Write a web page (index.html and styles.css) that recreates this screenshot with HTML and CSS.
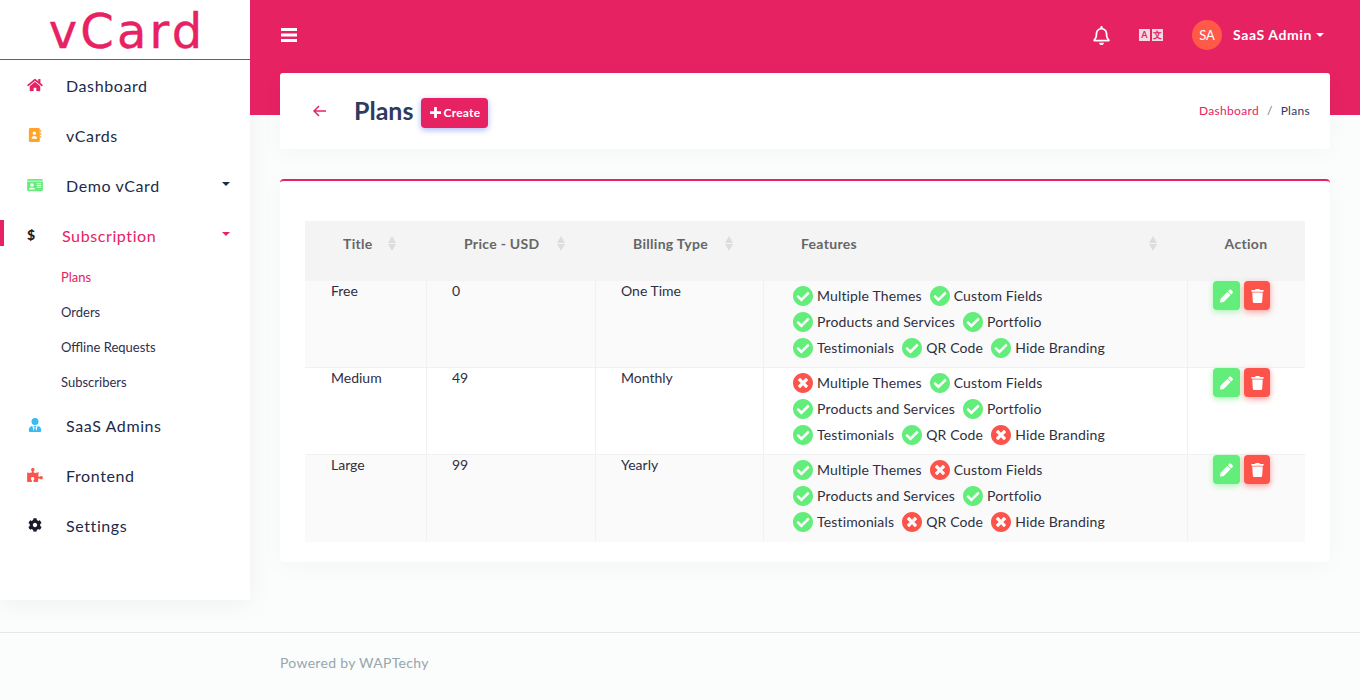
FILE: index.html
```html
<!DOCTYPE html>
<html lang="en">
<head>
  <meta charset="UTF-8">
  <title>Plans - vCard</title>
  <link rel="stylesheet" href="styles.css">
</head>
<body>
  <svg class="sprite" xmlns="http://www.w3.org/2000/svg">
    <symbol id="i-check" viewBox="8 8 496 496"><path d="M504 256c0 136.967-111.033 248-248 248S8 392.967 8 256 119.033 8 256 8s248 111.033 248 248zM227.314 387.314l184-184c6.248-6.248 6.248-16.379 0-22.627l-22.627-22.627c-6.248-6.249-16.379-6.249-22.628 0L216 308.118l-70.059-70.059c-6.248-6.248-16.379-6.248-22.628 0l-22.627 22.627c-6.248 6.248-6.248 16.379 0 22.627l104 104c6.249 6.25 16.379 6.25 22.628.001z"/></symbol>
    <symbol id="i-times" viewBox="8 8 496 496"><path d="M256 8C119 8 8 119 8 256s111 248 248 248 248-111 248-248S393 8 256 8zm121.6 313.1c4.7 4.7 4.7 12.3 0 17L338 377.6c-4.7 4.7-12.3 4.7-17 0L256 312l-65.1 65.6c-4.7 4.7-12.3 4.7-17 0L134.4 338c-4.7-4.7-4.7-12.3 0-17l65.6-65-65.6-65.1c-4.7-4.7-4.7-12.3 0-17l39.6-39.6c4.7-4.7 12.3-4.7 17 0l65 65.7 65.1-65.6c4.7-4.7 12.3-4.7 17 0l39.6 39.6c4.7 4.7 4.7 12.3 0 17L312 256l65.6 65.1z"/></symbol>
    <symbol id="i-pencil" viewBox="0 0 512 512"><path d="M497.9 142.1l-46.1 46.1c-4.7 4.7-12.3 4.7-17 0l-111-111c-4.7-4.7-4.7-12.3 0-17l46.1-46.1c18.7-18.7 49.1-18.7 67.9 0l60.1 60.1c18.8 18.7 18.8 49.1 0 67.9zM284.2 99.8L21.6 362.4.4 483.9c-2.9 16.4 11.4 30.6 27.8 27.8l121.5-21.3 262.6-262.6c4.7-4.7 4.7-12.3 0-17l-111-111c-4.8-4.7-12.4-4.7-17.1 0z"/></symbol>
    <symbol id="i-trash" viewBox="0 0 448 512"><path d="M432 32H312l-9.4-18.7A24 24 0 0 0 281.1 0H166.8a23.72 23.72 0 0 0-21.4 13.3L136 32H16A16 16 0 0 0 0 48v32a16 16 0 0 0 16 16h416a16 16 0 0 0 16-16V48a16 16 0 0 0-16-16zM53.2 467a48 48 0 0 0 47.9 45h245.8a48 48 0 0 0 47.9-45L416 128H32z"/></symbol>
  </svg>

  <aside class="sidebar">
    <div class="logo">vCard</div>
    <ul class="nav">
      <li class="nav-item">
        <svg class="nav-icon c-pink" viewBox="0 0 576 512"><path d="M280.37 148.26L96 300.11V464a16 16 0 0 0 16 16l112.06-.29a16 16 0 0 0 15.92-16V368a16 16 0 0 1 16-16h64a16 16 0 0 1 16 16v95.64a16 16 0 0 0 16 16.05L464 480a16 16 0 0 0 16-16V300L295.67 148.26a12.19 12.19 0 0 0-15.3 0zM571.6 251.47L488 182.56V44.05a12 12 0 0 0-12-12h-56a12 12 0 0 0-12 12v72.61L318.47 43a48 48 0 0 0-61 0L4.34 251.47a12 12 0 0 0-1.6 16.9l25.5 31A12 12 0 0 0 45.15 301l235.22-193.74a12.19 12.19 0 0 1 15.3 0L530.9 301a12 12 0 0 0 16.9-1.6l25.5-31a12 12 0 0 0-1.7-16.93z"/></svg>
        <span>Dashboard</span>
      </li>
      <li class="nav-item">
        <svg class="nav-icon c-orange" viewBox="0 0 448 512"><path d="M48 0h304a48 48 0 0 1 48 48v416a48 48 0 0 1-48 48H48a48 48 0 0 1-48-48V48A48 48 0 0 1 48 0zm152 128a64 64 0 1 0 0 128 64 64 0 0 0 0-128zm-96 240v24h192v-24c0-44-43-72-96-72s-96 28-96 72zM416 64h32v80h-32zm0 112h32v80h-32zm0 112h32v80h-32z"/></svg>
        <span>vCards</span>
      </li>
      <li class="nav-item has-caret">
        <svg class="nav-icon c-green" viewBox="0 0 576 512"><path d="M528 32H48C21.5 32 0 53.5 0 80v16h576V80c0-26.5-21.5-48-48-48zM0 432c0 26.5 21.5 48 48 48h480c26.5 0 48-21.5 48-48V128H0v304zm352-232c0-4.4 3.6-8 8-8h144c4.4 0 8 3.6 8 8v16c0 4.4-3.6 8-8 8H360c-4.4 0-8-3.6-8-8v-16zm0 64c0-4.4 3.6-8 8-8h144c4.4 0 8 3.6 8 8v16c0 4.4-3.6 8-8 8H360c-4.4 0-8-3.6-8-8v-16zm0 64c0-4.4 3.6-8 8-8h144c4.4 0 8 3.6 8 8v16c0 4.4-3.6 8-8 8H360c-4.4 0-8-3.6-8-8v-16zM176 192c35.3 0 64 28.7 64 64s-28.7 64-64 64-64-28.7-64-64 28.7-64 64-64zM67.1 396.2C75.5 370.5 99.6 352 128 352h8.2c12.3 5.1 25.7 8 39.8 8s27.6-2.9 39.8-8h8.2c28.4 0 52.5 18.5 60.9 44.2 3.2 9.9-5.2 19.8-15.6 19.8H82.7c-10.4 0-18.8-10-15.6-19.8z"/></svg>
        <span>Demo vCard</span>
      </li>
      <li class="nav-item has-caret active">
        <span class="nav-icon dollar">$</span>
        <span>Subscription</span>
      </li>
      <li class="sub-item current">Plans</li>
      <li class="sub-item">Orders</li>
      <li class="sub-item">Offline Requests</li>
      <li class="sub-item">Subscribers</li>
      <li class="nav-item">
        <svg class="nav-icon c-blue" viewBox="0 0 448 512"><path d="M224 256a128 128 0 1 0 0-256 128 128 0 0 0 0 256zm95.8 32.6L272 480l-32-136 32-56h-96l32 56-32 136-47.8-191.4C56.9 292 0 350.3 0 422.4V464c0 26.5 21.5 48 48 48h352c26.5 0 48-21.5 48-48v-41.6c0-72.1-56.9-130.4-128.2-133.8z"/></svg>
        <span>SaaS Admins</span>
      </li>
      <li class="nav-item">
        <svg class="nav-icon c-red" viewBox="0 0 576 512"><path d="M519.442 288.651c-41.519 0-59.5 31.593-82.058 31.593C377.409 320.244 432 144 432 144s-196.288 80-196.288-3.297c0-35.827 36.288-46.25 36.288-85.985C272 19.216 243.885 0 210.539 0c-34.654 0-66.366 18.891-66.366 56.346 0 41.364 31.711 59.277 31.711 81.75C175.885 207.719 0 166.758 0 166.758v333.237s178.635 41.047 178.635-28.662c0-22.473-40-40.107-40-81.471 0-37.456 29.25-56.346 63.577-56.346 33.673 0 61.788 19.216 61.788 54.717 0 39.735-36.288 50.158-36.288 85.985 0 60.803 129.675 25.73 181.23 25.73 0 0-34.725-120.101 25.827-120.101 35.962 0 46.423 36.152 86.308 36.152C556.712 416 576 387.99 576 354.443c0-34.199-18.962-65.792-56.558-65.792z"/></svg>
        <span>Frontend</span>
      </li>
      <li class="nav-item">
        <svg class="nav-icon c-dark" viewBox="0 0 512 512"><path d="M487.4 315.7l-42.6-24.6c4.3-23.2 4.3-47 0-70.2l42.6-24.6c4.9-2.8 7.1-8.6 5.5-14-11.1-35.6-30-67.8-54.7-94.6-3.8-4.1-10-5.1-14.8-2.3L380.8 110c-17.9-15.4-38.5-27.3-60.8-35.1V25.8c0-5.6-3.9-10.5-9.4-11.7-36.7-8.2-74.3-7.8-109.2 0-5.5 1.2-9.4 6.1-9.4 11.7V75c-22.2 7.9-42.8 19.8-60.8 35.1L88.7 85.5c-4.9-2.8-11-1.9-14.8 2.3-24.7 26.7-43.6 58.9-54.7 94.6-1.7 5.4.6 11.2 5.5 14L67.3 221c-4.3 23.2-4.3 47 0 70.2l-42.6 24.6c-4.9 2.8-7.1 8.6-5.5 14 11.1 35.6 30 67.8 54.7 94.6 3.8 4.1 10 5.1 14.8 2.3l42.6-24.6c17.9 15.4 38.5 27.3 60.8 35.1v49.2c0 5.6 3.9 10.5 9.4 11.7 36.7 8.2 74.3 7.8 109.2 0 5.5-1.2 9.4-6.1 9.4-11.7v-49.2c22.2-7.9 42.8-19.8 60.8-35.1l42.6 24.6c4.9 2.8 11 1.9 14.8-2.3 24.7-26.7 43.6-58.9 54.7-94.6 1.5-5.5-.7-11.3-5.6-14.1zM256 336c-44.1 0-80-35.9-80-80s35.9-80 80-80 80 35.9 80 80-35.9 80-80 80z"/></svg>
        <span>Settings</span>
      </li>
    </ul>
  </aside>

  <div class="main">
    <header class="topbar">
      <svg class="bars" viewBox="0 0 16 14"><path d="M0 0h16v3H0zM0 5.5h16v3H0zM0 11h16v3H0z"/></svg>
      <div class="topbar-right">
        <svg class="bell" viewBox="0 0 448 512"><path d="M224 512c35 0 64-29 64-64H160c0 35 29 64 64 64zm215-150c-19-21-55-52-55-154 0-78-54-140-128-155V32a32 32 0 0 0-64 0v21C118 68 64 130 64 208c0 102-36 133-55 154-6 6-9 14-9 22 0 16 13 32 32 32h384c19 0 32-16 32-32 0-8-3-16-9-22zM67 368c21-28 45-74 45-160v-1c0-62 50-111 112-111s112 49 112 112c0 86 24 132 45 160H67z"/></svg>
        <div class="lang"><span>A</span><span>文</span></div>
        <div class="avatar">SA</div>
        <div class="user">SaaS Admin</div>
      </div>
    </header>

    <div class="content">
      <section class="title-card">
        <svg class="back" viewBox="0 0 14 12"><path d="M6 1L1 6l5 5M1 6h12"/></svg>
        <h1>Plans</h1>
        <a class="btn-create"><svg class="plus" viewBox="0 0 12 12"><path d="M4.5 0h3v4.5H12v3H7.5V12h-3V7.5H0v-3h4.5z"/></svg>Create</a>
        <div class="breadcrumb">
          <a>Dashboard</a><span class="slash">/</span><span>Plans</span>
        </div>
      </section>

      <section class="table-card">
        <table class="plans">
          <thead>
            <tr>
              <th class="col-title"><div class="th-in"><span>Title</span><i class="sort"></i></div></th>
              <th class="col-price"><div class="th-in"><span>Price - USD</span><i class="sort"></i></div></th>
              <th class="col-billing"><div class="th-in"><span>Billing Type</span><i class="sort"></i></div></th>
              <th class="col-features"><div class="th-in"><span>Features</span><i class="sort"></i></div></th>
              <th class="col-action">Action</th>
            </tr>
          </thead>
          <tbody>
            <tr>
              <td>Free</td><td>0</td><td>One Time</td>
              <td class="features">
                <div class="f-row">
                  <span class="f"><svg class="yes"><use href="#i-check"/></svg>Multiple Themes</span>
                  <span class="f"><svg class="yes"><use href="#i-check"/></svg>Custom Fields</span>
                </div>
                <div class="f-row">
                  <span class="f"><svg class="yes"><use href="#i-check"/></svg>Products and Services</span>
                  <span class="f"><svg class="yes"><use href="#i-check"/></svg>Portfolio</span>
                </div>
                <div class="f-row">
                  <span class="f"><svg class="yes"><use href="#i-check"/></svg>Testimonials</span>
                  <span class="f"><svg class="yes"><use href="#i-check"/></svg>QR Code</span>
                  <span class="f"><svg class="yes"><use href="#i-check"/></svg>Hide Branding</span>
                </div>
              </td>
              <td class="actions">
                <div class="btns">
                  <a class="btn-edit"><svg><use href="#i-pencil"/></svg></a>
                  <a class="btn-del"><svg><use href="#i-trash"/></svg></a>
                </div>
              </td>
            </tr>
            <tr>
              <td>Medium</td><td>49</td><td>Monthly</td>
              <td class="features">
                <div class="f-row">
                  <span class="f"><svg class="no"><use href="#i-times"/></svg>Multiple Themes</span>
                  <span class="f"><svg class="yes"><use href="#i-check"/></svg>Custom Fields</span>
                </div>
                <div class="f-row">
                  <span class="f"><svg class="yes"><use href="#i-check"/></svg>Products and Services</span>
                  <span class="f"><svg class="yes"><use href="#i-check"/></svg>Portfolio</span>
                </div>
                <div class="f-row">
                  <span class="f"><svg class="yes"><use href="#i-check"/></svg>Testimonials</span>
                  <span class="f"><svg class="yes"><use href="#i-check"/></svg>QR Code</span>
                  <span class="f"><svg class="no"><use href="#i-times"/></svg>Hide Branding</span>
                </div>
              </td>
              <td class="actions">
                <div class="btns">
                  <a class="btn-edit"><svg><use href="#i-pencil"/></svg></a>
                  <a class="btn-del"><svg><use href="#i-trash"/></svg></a>
                </div>
              </td>
            </tr>
            <tr>
              <td>Large</td><td>99</td><td>Yearly</td>
              <td class="features">
                <div class="f-row">
                  <span class="f"><svg class="yes"><use href="#i-check"/></svg>Multiple Themes</span>
                  <span class="f"><svg class="no"><use href="#i-times"/></svg>Custom Fields</span>
                </div>
                <div class="f-row">
                  <span class="f"><svg class="yes"><use href="#i-check"/></svg>Products and Services</span>
                  <span class="f"><svg class="yes"><use href="#i-check"/></svg>Portfolio</span>
                </div>
                <div class="f-row">
                  <span class="f"><svg class="yes"><use href="#i-check"/></svg>Testimonials</span>
                  <span class="f"><svg class="no"><use href="#i-times"/></svg>QR Code</span>
                  <span class="f"><svg class="no"><use href="#i-times"/></svg>Hide Branding</span>
                </div>
              </td>
              <td class="actions">
                <div class="btns">
                  <a class="btn-edit"><svg><use href="#i-pencil"/></svg></a>
                  <a class="btn-del"><svg><use href="#i-trash"/></svg></a>
                </div>
              </td>
            </tr>
          </tbody>
        </table>
      </section>
    </div>

    <footer class="footer">Powered by WAPTechy</footer>
  </div>
</body>
</html>
```

FILE: styles.css
```css
* {
  margin: 0;
  padding: 0;
  box-sizing: border-box;
}

body {
  font-family: "Lato", "Noto Sans", sans-serif;
  font-size: 14px;
  color: #2b2d42;
  background-color: #fafdfb;
  display: flex;
  align-items: flex-start;
  height: 700px;
  overflow: hidden;
}

.sprite {
  display: none;
}

/* sidebar */
.sidebar {
  width: 250px;
  height: 600px;
  flex-shrink: 0;
  background-color: #fff;
  box-shadow: 0 4px 25px rgba(0, 0, 0, 0.05);
}

.logo {
  height: 60px;
  border-bottom: 1px solid #c8305f;
  color: #e62263;
  font-family: "DejaVu Sans", sans-serif;
  font-size: 48px;
  letter-spacing: 3.2px;
  -webkit-text-stroke: 0.4px #e62263;
  line-height: 62px;
  padding-left: 4px;
  text-align: center;
  overflow: hidden;
}

.nav {
  list-style: none;
}

.nav-item {
  height: 50px;
  padding-left: 27px;
  display: flex;
  align-items: center;
  position: relative;
  font-size: 16px;
  letter-spacing: 0.6px;
  color: #1b2b4a;
}

.nav-icon {
  width: 16px;
  height: 14px;
  margin-right: 23px;
  margin-top: -1px;
  flex-shrink: 0;
}

.c-pink { fill: #e62263; }
.c-orange { fill: #ffa426; }
.c-green { fill: #63ed7a; }
.c-blue { fill: #3abaf4; }
.c-red { fill: #fc544b; }
.c-dark { fill: #1a1a2a; }

.dollar {
  color: #191d21;
  font-weight: 900;
  font-size: 14px;
  line-height: 14px;
  margin-right: 19px;
  letter-spacing: 0;
}

.has-caret::after {
  content: "";
  position: absolute;
  right: 20px;
  top: 22px;
  border-top: 4px solid #1b2b4a;
  border-left: 4px solid transparent;
  border-right: 4px solid transparent;
}

.active {
  color: #e62263;
}

.active::before {
  content: "";
  position: absolute;
  left: 0;
  top: 10px;
  width: 4px;
  height: 26px;
  background-color: #e62263;
}

.active::after {
  border-top-color: #e62263;
}

.sub-item {
  height: 35px;
  line-height: 35px;
  padding-left: 61px;
  font-size: 13px;
  color: #2f2f4f;
}

.sub-item.current {
  color: #e62263;
}

/* main column */
.main {
  flex: 1;
  min-width: 0;
}

.topbar {
  height: 115px;
  background-color: #e62263;
  padding: 0 36px 45px 31px;
  display: flex;
  align-items: center;
  justify-content: space-between;
  color: #fff;
}

.bars {
  width: 16px;
  height: 14px;
  fill: #fff;
}

.topbar-right {
  display: flex;
  align-items: center;
}

.bell {
  width: 17px;
  height: 19px;
  fill: #fff;
  margin-right: 29px;
}

.lang {
  display: flex;
  gap: 2px;
  margin-right: 29px;
}

.lang span {
  width: 11px;
  height: 12px;
  background-color: #f3dbe4;
  color: #e62263;
  font-size: 9px;
  font-weight: 700;
  line-height: 12px;
  text-align: center;
}

.avatar {
  width: 30px;
  height: 30px;
  border-radius: 50%;
  background-color: #ff5a48;
  font-size: 13px;
  line-height: 30px;
  text-align: center;
  margin-right: 11px;
}

.user {
  font-weight: 700;
  font-size: 14px;
  letter-spacing: 0.6px;
  display: flex;
  align-items: center;
  margin-top: -1px;
}

.user::after {
  content: "";
  margin-left: 4px;
  border-top: 4px solid #fff;
  border-left: 4px solid transparent;
  border-right: 4px solid transparent;
}

.content {
  padding: 0 30px;
  margin-top: -42px;
}

.title-card {
  height: 76px;
  background-color: #fff;
  border-radius: 3px;
  box-shadow: 0 4px 25px rgba(0, 0, 0, 0.03);
  display: flex;
  align-items: center;
  padding: 0 20px 0 33px;
}

.back {
  width: 14px;
  height: 12px;
  fill: none;
  stroke: #e62263;
  stroke-width: 1.5;
  margin-right: 27px;
}

h1 {
  font-size: 25px;
  font-weight: 700;
  color: #2f3a5f;
  margin-right: 8px;
  margin-top: -3px;
}

.btn-create {
  height: 30px;
  width: 67px;
  background-color: #e62263;
  color: #fff;
  font-size: 12px;
  font-weight: 700;
  letter-spacing: 0.2px;
  border-radius: 4px;
  display: flex;
  align-items: center;
  justify-content: center;
  box-shadow: 0 2px 6px #acb5f6;
  margin-top: 3px;
}

.plus {
  width: 11px;
  height: 11px;
  fill: #fff;
  margin-right: 3px;
}

.breadcrumb {
  margin-left: auto;
  margin-top: -2px;
  font-size: 12px;
  letter-spacing: 0.3px;
  color: #34395e;
}

.breadcrumb a {
  color: #e62263;
}

.slash {
  color: #6c757d;
  margin: 0 8px;
}

.table-card {
  margin-top: 30px;
  height: 383px;
  background-color: #fff;
  border-top: 2px solid #e62263;
  border-radius: 4px;
  box-shadow: 0 4px 25px rgba(0, 0, 0, 0.03);
  padding: 40px 25px 20px;
}

/* plans table */
.plans {
  width: 1000px;
  table-layout: fixed;
  border-collapse: separate;
  border-spacing: 0;
}

.col-title { width: 121px; }
.col-price { width: 169px; }
.col-billing { width: 168px; }
.col-features { width: 424px; }
.col-action { width: 118px; }

.plans thead tr {
  height: 60px;
  background-color: #f4f4f4;
}

.plans th {
  color: #666;
  font-size: 14px;
  font-weight: 700;
  letter-spacing: 0.3px;
  vertical-align: top;
  padding-top: 14px;
  line-height: 17px;
}

.th-in {
  display: flex;
  align-items: center;
  justify-content: space-between;
  padding: 0 29px 0 38px;
}

.sort {
  width: 9px;
  height: 15px;
  display: block;
  position: relative;
}

.sort::before,
.sort::after {
  content: "";
  position: absolute;
  left: 0;
  border-left: 4.5px solid transparent;
  border-right: 4.5px solid transparent;
}

.sort::before {
  top: 0;
  border-bottom: 7px solid #ddd;
}

.sort::after {
  bottom: 0;
  border-top: 7px solid #ddd;
}

.plans tbody tr {
  height: 87px;
}

.plans tbody tr:nth-child(odd) {
  background-color: #fafafa;
}

.plans td {
  vertical-align: top;
  padding: 1px 25px 0;
  line-height: 17px;
  border-left: 1px solid #f1f1f1;
  border-bottom: 1px solid #f1f1f1;
  color: #2f2f3f;
}

.plans td:first-child {
  border-left: 0;
  padding-left: 26px;
}

.plans tbody tr:last-child td {
  border-bottom: 0;
}

.plans td.features {
  padding: 5px 0 0 29px;
}

.f-row {
  display: flex;
  gap: 8px;
  height: 26px;
}

.f {
  display: flex;
  align-items: flex-start;
  gap: 4px;
  line-height: 20px;
  letter-spacing: 0.15px;
  white-space: nowrap;
}

.f svg {
  width: 20px;
  height: 20px;
}

.yes { fill: #63ed7a; }
.no { fill: #fc544b; }

.plans td.actions {
  padding: 0 0 0 25px;
}

.btns {
  display: flex;
  gap: 4px;
}

.btns a {
  width: 27px;
  height: 29px;
  border-radius: 4px;
  display: flex;
  align-items: center;
  justify-content: center;
}

.btn-edit {
  background-color: #63ed7a;
  box-shadow: 0 2px 6px #a8f5b4;
}

.btns .btn-del {
  width: 26px;
  background-color: #fc544b;
  box-shadow: 0 2px 6px #fd9b96;
}

.btns svg {
  width: 13px;
  height: 14px;
  fill: #fff;
}

.footer {
  margin-top: 70px;
  height: 68px;
  margin-left: -250px;
  border-top: 1px solid #e5e7ea;
  padding: 20px 0 0 280px;
  color: #98a6ad;
  font-size: 14px;
  letter-spacing: 0.3px;
  line-height: 19px;
}
```
